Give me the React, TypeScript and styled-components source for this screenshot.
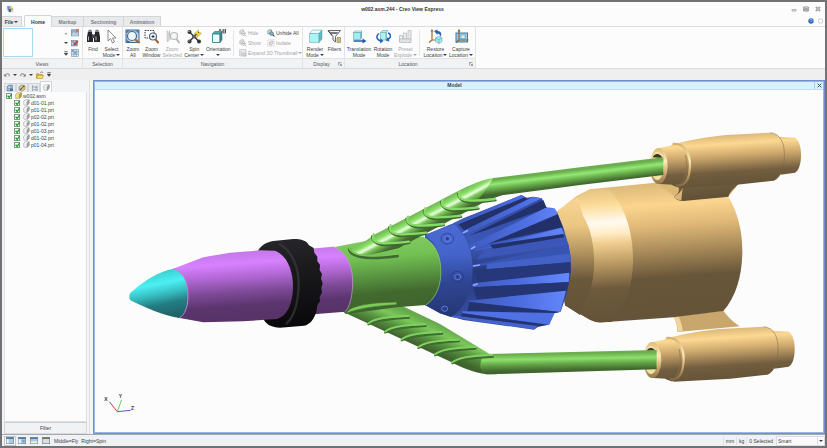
import React, { useState } from "react";
import styled, { createGlobalStyle, css } from "styled-components";

const Global = createGlobalStyle`
  * { box-sizing: border-box; }
  body { margin: 0; background: #fbfbfb; }
  body, button, select, input {
    font-family: "Liberation Sans", Arial, sans-serif;
    font-size: 5px;
    line-height: 6px;
    color: #3c3f44;
  }
  button { margin: 0; padding: 0; border: 0; background: none; }
  button:disabled { color: #a3a5a8; }
  svg { display: block; flex: none; }
`;

/* ---------- window frame ---------- */

const Window = styled.div`
  display: flex;
  flex-direction: column;
  height: 100vh;
  min-height: 300px;
  border: 2px solid #727174;
  background: #fcfcfc;
`;

const TitleBar = styled.header`
  display: grid;
  grid-template-columns: 1fr auto 1fr;
  align-items: center;
  height: 14px;
  padding: 0 4px;
`;

const Title = styled.h1`
  margin: 0;
  padding-right: 22px;
  font-size: 5px;
  font-weight: bold;
  color: #33363a;
`;

const WindowButtons = styled.div`
  display: flex;
  justify-content: flex-end;
  gap: 6px;
`;

const TabBar = styled.div`
  display: flex;
  align-items: flex-end;
  height: 11px;
  padding-right: 2px;
  border-bottom: 1px solid #dcdcde;
`;

const RibbonTab = styled.button<{ $active?: boolean; $w: number }>`
  width: ${(p) => p.$w}px;
  height: 10px;
  border: 1px solid #d3d5d8;
  border-left-width: 0;
  border-bottom: 0;
  background: #e9eaec;
  color: #7b8087;
  font-weight: bold;
  ${(p) =>
    p.$active &&
    css`
      height: 12px;
      margin-bottom: -1px;
      border-left-width: 1px;
      border-radius: 2px 2px 0 0;
      background: #fcfcfc;
      color: #33363a;
    `}
`;

const FileButton = styled(RibbonTab)`
  display: flex;
  align-items: center;
  justify-content: center;
  gap: 1px;
  margin-right: 2px;
  color: #3c3f44;
`;

const HelpTools = styled.div`
  display: flex;
  gap: 4px;
  margin-left: auto;
  padding-bottom: 2px;
`;

/* ---------- ribbon ---------- */

const Ribbon = styled.div`
  display: flex;
  height: 42px;
  border-bottom: 1px solid #dcdcde;
`;

const Group = styled.section<{ $w: number }>`
  display: flex;
  flex-direction: column;
  flex: none;
  width: ${(p) => p.$w}px;
  border-right: 1px solid #e2e3e5;
`;

const GroupBody = styled.div`
  display: flex;
  flex: 1;
  padding: 1px 1px 0;
`;

const GroupName = styled.div`
  display: flex;
  align-items: center;
  height: 10px;
  padding: 0 2px;
  border-top: 1px solid #e2e3e5;
  background: #f1f2f4;
  color: #55595f;

  span {
    flex: 1;
    text-align: center;
  }
`;

const ToolButton = styled.button<{ $w: number }>`
  display: flex;
  flex-direction: column;
  align-items: center;
  width: ${(p) => p.$w}px;
  white-space: nowrap;

  svg {
    margin: 1px 0 2px;
  }
  &:disabled svg {
    opacity: 0.6;
  }
`;

const ToolLine = styled.span`
  display: flex;
  align-items: center;
  gap: 1px;
  height: 6px;
`;

const Caret = styled.span`
  width: 0;
  height: 0;
  border: 2px solid transparent;
  border-top: 2px solid currentColor;
  border-bottom: 0;
`;

const Divider = styled.span`
  width: 1px;
  height: 26px;
  margin: 2px 3px 0 2px;
  background: #e4e5e7;
`;

const SmallTools = styled.div`
  display: grid;
  grid-template-columns: 28px 34px;
  grid-template-rows: repeat(3, 10px);
  padding-left: 2px;
`;

const SmallTool = styled.button<{ $wide?: boolean }>`
  display: flex;
  align-items: center;
  gap: 1px;
  white-space: nowrap;
  ${(p) => p.$wide && "grid-column: span 2;"}
`;

const Preview = styled.button`
  width: 30px;
  height: 29px;
  border: 1px solid #a6daf2;
  background: #fdfeff;
`;

const ViewScroll = styled.div`
  display: grid;
  grid-template-columns: 6px 8px;
  grid-template-rows: repeat(3, 10px);
  gap: 0 2px;
  margin-left: auto;
  padding-right: 2px;
  align-items: center;

  button {
    display: flex;
    justify-content: center;
  }
`;

const QuickAccess = styled.div`
  display: flex;
  align-items: center;
  gap: 3px;
  height: 11px;
  padding-left: 2px;
  background: #efeff0;

  button {
    display: flex;
  }
`;

/* ---------- work area ---------- */

const WorkArea = styled.main`
  display: flex;
  flex: 1;
  gap: 3px;
  min-height: 0;
  background: #f3f4f6;
`;

const Sidebar = styled.aside`
  display: flex;
  flex-direction: column;
  flex: none;
  width: 88px;
  padding: 1px 2px 0;
  border-right: 1px solid #dfe1e5;
`;

const SideTabs = styled.div`
  display: flex;
  flex: none;
  align-items: flex-end;
  height: 11px;
`;

const SideTab = styled.button<{ $active?: boolean }>`
  display: flex;
  align-items: center;
  justify-content: center;
  width: 12px;
  height: ${(p) => (p.$active ? 11 : 9)}px;
  border: 1px solid #d3d5d8;
  border-bottom: 0;
  background: ${(p) => (p.$active ? "#fcfcfc" : "#e9ebee")};
`;

const Tree = styled.ul`
  flex: 1;
  margin: 0;
  padding: 0 1px;
  list-style: none;
  border: 1px solid #dfe1e5;
  border-top: 0;
  background: #fcfcfc;
`;

const TreeRow = styled.li<{ $level: number }>`
  height: 7px;
  padding-left: ${(p) => p.$level * 8}px;

  label {
    display: flex;
    align-items: center;
    gap: 1px;
    height: 7px;
  }
  svg {
    margin-left: 2px;
  }
`;

const Check = styled.input`
  appearance: none;
  display: grid;
  place-items: center;
  width: 6px;
  height: 6px;
  margin: 0;
  border: 1px solid #7f9a83;
  background: #fff;

  &:checked::before {
    content: "";
    width: 5px;
    height: 5px;
    background: #179a22;
    clip-path: polygon(0 50%, 25% 35%, 42% 58%, 85% 0, 100% 20%, 45% 100%);
  }
`;

const FilterButton = styled.button`
  flex: none;
  height: 12px;
  border: 1px solid #d6d8dc;
  border-top-color: #c9ccd1;
  background: #f1f2f4;
`;

const Viewport = styled.section`
  display: flex;
  flex: 1;
  flex-direction: column;
  min-width: 0;
  border: 1px solid #6e8fd6;
  outline: 1px solid #9db4e6;
  outline-offset: -2px;
  background: #fcfcfc;
`;

const ViewportBar = styled.div`
  display: flex;
  flex: none;
  align-items: center;
  height: 9px;
  margin: 0 1px 1px;
  background: #d8f2fd;
  border-bottom: 1px solid #c3def0;
`;

const ViewportTitle = styled.h2`
  flex: 1;
  margin: 0;
  text-align: center;
  font-size: 5px;
  font-weight: bold;
  color: #2f4250;
`;

const CloseView = styled.button`
  display: grid;
  place-items: center;
  width: 9px;
  height: 8px;
  border-left: 1px solid #a9cde6;
`;

const Scene = styled.div`
  flex: 1;
  min-height: 0;

  svg {
    width: 100%;
    height: 100%;
  }
`;

const StatusBar = styled.footer`
  display: flex;
  flex: none;
  align-items: center;
  height: 12px;
  padding-left: 2px;
  border-top: 1px solid #a7a9ae;
  background: #f0f1f3;
`;

const LayoutButton = styled.button<{ $active?: boolean }>`
  display: grid;
  place-items: center;
  width: 12px;
  height: 10px;
  ${(p) => p.$active && "border: 1px solid #c3c6cc; background: #fafafa;"}
`;

const Hint = styled.span`
  margin: 0 1px 0 2px;
`;

const StatusCell = styled.span<{ $push?: boolean }>`
  margin-left: ${(p) => (p.$push ? "auto" : "0")};
  padding: 1px 2px;
  border-left: 1px solid #e0e1e4;
`;

const SelectWrap = styled.div`
  display: flex;
  align-items: center;
  width: 49px;
  height: 10px;
  margin-left: 1px;
  border: 1px solid #dadce0;
  background: #fafafa;
`;

const SmartSelect = styled.select`
  appearance: none;
  flex: 1;
  min-width: 0;
  height: 8px;
  padding: 0 1px;
  border: 0;
  border-right: 1px solid #dadce0;
  background: none;
`;

const SelectArrow = styled.span`
  display: grid;
  place-items: center;
  width: 6px;
`;

/* ---------- icons ---------- */

const Ico = ({ children, s = 15 }: { children: React.ReactNode; s?: number }) => (
  <svg width={s} height={s} viewBox="0 0 30 30" fill="none" aria-hidden="true">
    {children}
  </svg>
);

const Cube = ({ fill = "#a9f4f5" }: { fill?: string }) => (
  <>
    <path d="M3 9 9 2H28L22 9Z" fill="#e2ffff" stroke="#6e9aa0" />
    <path d="M3 9H22V27H3Z" fill={fill} stroke="#6e9aa0" />
    <path d="M22 9 28 2V20L22 27Z" fill="#5fb9c4" stroke="#6e9aa0" />
  </>
);

const Lens = ({ x = 18, y = 13, r = 7, c = "#54667a" }) => (
  <>
    <path d={`M${x + 5} ${y + 6}L28 27`} stroke={c === "#54667a" ? "#a8642c" : c} strokeWidth="4" strokeLinecap="round" />
    <circle cx={x} cy={y} r={r} fill="#eaf6fc" stroke={c} strokeWidth="2.4" />
  </>
);

const icons: Record<string, React.ReactNode> = {
  app: (
    <>
      <path d="M4 4H20L26 11V26H9L4 20Z" fill="#dfe8f2" stroke="#8b9bb0" />
      <path d="M5 5H17L13 15H5Z" fill="#5a9ad0" />
      <path d="M16 8 26 12V20L18 22Z" fill="#ecb03a" />
      <path d="M9 15 19 14V26H11Z" fill="#356f9d" />
      <circle cx="10" cy="18" r="3" fill="#d3553a" />
    </>
  ),
  find: (
    <>
      <path d="M4 5H12V10L14 12V26H2V16Z M18 5H26L28 16V26H16V12L18 10Z" fill="#24262a" />
      <path d="M12 11H18V18H12Z" fill="#45484d" />
      <path d="M5 15V23M20 15V23" stroke="#b5b8bd" strokeWidth="2" />
      <path d="M5 3H11M19 3H25" stroke="#74777c" strokeWidth="3" />
    </>
  ),
  select: <path d="M8 2V24L13 19 17 28 21 26 17 18H24Z" fill="#fff" stroke="#6f7276" strokeWidth="1.6" />,
  zoomAll: (
    <>
      <rect x="2" y="2" width="26" height="25" fill="#b9dcf3" stroke="#3b6b9a" strokeWidth="2" />
      <path d="M4 8V4H9M21 4H26V8M4 21V25H9" stroke="#2b5a88" strokeWidth="2" />
      <Lens x={14} y={14} r={9} />
    </>
  ),
  zoomWindow: (
    <>
      <rect x="2" y="3" width="18" height="15" stroke="#33363a" strokeWidth="2" strokeDasharray="3 2" />
      <Lens x={18} y={15} r={7} />
      <path d="M15 15H21M18 12V18" stroke="#33363a" strokeWidth="2" />
    </>
  ),
  zoomSelected: (
    <>
      <path d="M4 3V26L14 18Z" fill="#b9bbbe" stroke="#8d9093" />
      <path d="M9 3V14" stroke="#8d9093" strokeWidth="2" />
      <Lens x={18} y={14} r={7} c="#8d9093" />
    </>
  ),
  spin: (
    <>
      <path d="M5 6 14 15 24 25M14 15 5 25M14 15 24 6" stroke="#3a3d41" strokeWidth="3" />
      <path d="M15 9 23 2 22 8H29L19 18 21 11Z" fill="#ffdf2e" stroke="#a58a14" />
      <circle cx="5" cy="6" r="4" fill="#303338" />
      <circle cx="5" cy="25" r="4" fill="#303338" />
      <circle cx="24" cy="25" r="4" fill="#303338" />
      <circle cx="14" cy="15" r="4" fill="#5b5f66" />
      <circle cx="4" cy="5" r="1.2" fill="#fff" />
      <circle cx="4" cy="24" r="1.2" fill="#fff" />
    </>
  ),
  orientation: (
    <>
      <path d="M3 10 7 5H22L18 10Z" fill="#49a8ae" stroke="#3d4a50" />
      <path d="M3 10H18V27H3Z" fill="#e8ffff" stroke="#3f9299" strokeWidth="2" />
      <path d="M18 10 22 5V22L18 27Z" fill="#3a8f97" stroke="#3d4a50" />
      <path d="M16 4 18 0 20 4M24 0V8H29V0Z M24 4H29" stroke="#33363a" strokeWidth="1.6" />
    </>
  ),
  render: <Cube />,
  filters: (
    <>
      <path d="M2 3H27L17 15V26L12 22V15Z" fill="#f2f2ee" stroke="#63676c" strokeWidth="2" />
      <path d="M6 6H23L19 10H9Z" fill="#777b80" />
      <path d="M20 17H27V27H20Z" fill="#c8c17a" stroke="#6a6a4a" />
      <path d="M3 4 10 13" stroke="#33363a" strokeWidth="2" />
    </>
  ),
  translation: (
    <>
      <path d="M3 7 6 4H20L17 7Z" fill="#e2ffff" stroke="#5c8c98" />
      <path d="M3 7H17V21H3Z" fill="#9feef2" stroke="#5c8c98" />
      <path d="M17 7 20 4V18L17 21Z" fill="#5fb9c4" />
      <path d="M3 24H22" stroke="#2358a8" strokeWidth="3" />
      <path d="M21 19 29 24 21 29Z" fill="#2358a8" />
    </>
  ),
  rotation: (
    <>
      <path d="M9 7 13 3H24L21 7V19L18 22H9Z" fill="#a9f4f5" stroke="#5c8c98" />
      <path d="M9 7H20V21" stroke="#5c8c98" />
      <path d="M6 9C-1 14 1 22 10 24" stroke="#2363b8" strokeWidth="3" />
      <path d="M9 19 15 24 8 29Z" fill="#2363b8" />
      <path d="M24 21C31 17 30 9 24 8" stroke="#2363b8" strokeWidth="3" />
      <path d="M24 16 19 23 27 25Z" fill="#2363b8" />
    </>
  ),
  explode: (
    <>
      <path d="M3 13H9V24H3Z M11 8H17V20H11Z M20 3H26V20H20Z" fill="#e3e4e6" stroke="#8f9195" strokeWidth="1.6" />
      <path d="M3 20H26V27H3Z" fill="#d2d4d7" stroke="#8f9195" strokeWidth="1.6" />
    </>
  ),
  restore: (
    <>
      <path d="M8 2V22M8 22 2 27M8 22H20" stroke="#9d6a2a" strokeWidth="2.4" />
      <path d="M5 5 8 0 11 5Z" fill="#9d6a2a" />
      <path d="M12 4 19 1V4C27 4 28 11 25 16 24 11 22 9 19 9V12Z" fill="#2563bb" />
      <path d="M15 18 22 14 28 18V25L22 29 15 25Z" fill="#9feef2" stroke="#5c8c98" />
      <path d="M15 18 22 21 28 18M22 21V29" stroke="#5c8c98" />
    </>
  ),
  capture: (
    <>
      <rect x="4" y="8" width="23" height="18" fill="#9cc9e8" stroke="#3f79ab" strokeWidth="2" />
      <path d="M10 2V22M10 22 4 27M10 22H29" stroke="#87602c" strokeWidth="2.2" />
      <path d="M7 5 10 0 13 5Z" fill="#87602c" />
      <path d="M14 12H22V19H14Z" fill="#c6fbfc" stroke="#558fa8" />
    </>
  ),
  hide: (
    <>
      <path d="M3 7 8 3H17V15L13 18H3Z" fill="#e0e1e3" stroke="#a5a7ab" strokeWidth="2" />
      <circle cx="17" cy="17" r="7" fill="#eee" stroke="#a5a7ab" strokeWidth="2" />
      <path d="M22 22 28 28M12 17H22" stroke="#a5a7ab" strokeWidth="3" />
    </>
  ),
  unhide: (
    <>
      <path d="M3 7 8 3H17V15L13 18H3Z" fill="#bfd7e2" stroke="#55707c" strokeWidth="2" />
      <circle cx="17" cy="17" r="7" fill="#7fb2c4" stroke="#3e5560" strokeWidth="2" />
      <path d="M22 22 28 28" stroke="#3a3d41" strokeWidth="4" />
    </>
  ),
  isolate: (
    <>
      <rect x="3" y="3" width="24" height="24" stroke="#a5a7ab" strokeWidth="2" strokeDasharray="4 3" />
      <path d="M9 12 14 8H22V18L18 22H9Z" fill="#dcdddf" stroke="#a5a7ab" strokeWidth="2" />
    </>
  ),
  thumb: (
    <>
      <rect x="3" y="3" width="23" height="23" fill="#f1f1f2" stroke="#a5a7ab" strokeWidth="2" />
      <path d="M8 8V20H20M8 20 18 10" stroke="#a5a7ab" strokeWidth="2" />
      <circle cx="21" cy="21" r="6" fill="#d5d6d8" stroke="#a5a7ab" strokeWidth="2" />
    </>
  ),
  viewA: (
    <>
      <rect x="1" y="3" width="28" height="23" fill="#8fb1d1" stroke="#5f7893" strokeWidth="2" />
      <path d="M3 19 12 11 18 17 27 12V25H3Z" fill="#c2cfdb" />
      <path d="M19 1H28V10H19Z" fill="#cf6e4f" />
    </>
  ),
  viewB: (
    <>
      <rect x="1" y="5" width="24" height="21" fill="#a5c3dd" stroke="#5f7893" strokeWidth="2" />
      <path d="M8 22 22 5 28 10 14 26Z" fill="#c4483a" />
      <path d="M6 8 20 22" stroke="#7d4654" strokeWidth="3" />
    </>
  ),
  viewC: (
    <>
      <rect x="2" y="2" width="26" height="26" fill="#dce8f3" stroke="#6484a5" strokeWidth="2" />
      <path d="M2 10H28M2 19H28M11 2V28M20 2V28" stroke="#6484a5" strokeWidth="2" />
      <path d="M3 3H11V10H3ZM12 11H20V19H12Z" fill="#7ba0c8" />
    </>
  ),
  undo: <path d="M4 10V21H13M5 20C8 8 20 6 26 12V21" stroke="#64676c" strokeWidth="4" />,
  redo: <path d="M26 10V21H17M25 20C22 8 10 6 4 12V21" stroke="#64676c" strokeWidth="4" />,
  folder: (
    <>
      <path d="M2 10H10L13 13H24V27H2Z" fill="#d9b73c" stroke="#9c8220" strokeWidth="2" />
      <path d="M7 17H29L23 27H2Z" fill="#ffe978" stroke="#a58b22" strokeWidth="2" />
      <path d="M16 8C18 2 24 2 27 7" stroke="#59626c" strokeWidth="2.6" />
    </>
  ),
  sideA: (
    <>
      <path d="M4 9 12 4H24V19L17 26H4Z" fill="#9dbbd3" stroke="#4e6f8d" strokeWidth="2" />
      <circle cx="12" cy="12" r="5" fill="#e9eef3" stroke="#4e6f8d" strokeWidth="2" />
      <path d="M15 17H26V27H15Z" fill="#42749e" />
    </>
  ),
  sideB: (
    <>
      <path d="M4 10 14 4 26 8V20L16 27 4 22Z" fill="#dad7a6" stroke="#5c5f55" strokeWidth="2" />
      <path d="M8 22 24 6" stroke="#4d4b3a" strokeWidth="4" />
      <path d="M16 14 25 12V20L17 24Z" fill="#e9bd3e" />
    </>
  ),
  sideC: (
    <path d="M7 3V27M7 9H18M7 20H18M4 4H10M20 6H27V12H20ZM20 17H27V23H20Z" stroke="#6f7d8e" strokeWidth="2.4" />
  ),
  part: (
    <>
      <path d="M3 9 12 3H26V19L17 27H8C4 27 3 24 3 20Z" fill="#f4f4f2" stroke="#85888d" strokeWidth="2" />
      <path d="M17 12 26 4V19L17 27Z" fill="#a9abad" stroke="#77797d" strokeWidth="2" />
    </>
  ),
  assembly: (
    <>
      <path d="M3 9 12 3H27V19L18 27H3Z" fill="#f4e48c" stroke="#857a45" strokeWidth="2" />
      <path d="M18 11 27 4V19L18 27Z" fill="#c2a63c" stroke="#857a45" strokeWidth="2" />
    </>
  ),
};

const Panel = ({ kind }: { kind: number }) => (
  <svg width="8" height="7" viewBox="0 0 24 21" aria-hidden="true">
    <rect x="1" y="1" width="22" height="19" fill={kind === 3 ? "#d8dfd8" : "#a9cbe4"} stroke="#6f8393" strokeWidth="2" />
    <rect x="1" y="1" width="22" height="5" fill={kind === 3 ? "#69746c" : "#4f7ba2"} />
    {kind < 2 && <rect x="2" y="6" width="6" height="13" fill="#eef5fa" />}
    {kind === 1 && <path d="M13 10H20M13 14H20" stroke="#4f7ba2" strokeWidth="2" />}
    {kind === 2 && <rect x="2" y="13" width="20" height="6" fill="#f2ecd0" />}
  </svg>
);

/* ---------- 3D model ---------- */

const stops = (list: [number, string][]) =>
  list.map(([o, c]) => <stop key={o} offset={o} stopColor={c} />);

const Grad = ({ id, v, list }: { id: string; v: [number, number, number, number]; list: [number, string][] }) => (
  <linearGradient id={id} gradientUnits="userSpaceOnUse" x1={v[0]} y1={v[1]} x2={v[2]} y2={v[3]}>
    {stops(list)}
  </linearGradient>
);

const Nacelle = () => (
  <g>
    <path d="M715 50 765 53C777 60 784 82 783 110 782 136 775 152 765 158L722 164Z" fill="url(#pod)" />
    <path d="M395 74C440 62 500 50 560 45L690 38C722 40 735 72 733 110 733 145 722 174 700 182L590 194 420 203Z" fill="url(#pod)" />
    <path d="M690 38C722 40 735 72 733 110 733 145 722 174 700 182" stroke="#7a6542" strokeWidth="1.5" fill="none" />
    <path d="M395 74C430 64 456 90 457 134 457 180 440 204 412 202L395 195Z" fill="url(#pod)" />
    <path d="M398 72C432 68 450 98 450 136 449 178 436 200 408 196" fill="none" stroke="url(#rim)" strokeWidth="7" />
    <path d="M355 84 400 76C430 76 442 105 441 137 440 172 428 194 400 194L358 192Z" fill="url(#pod)" />
    <path d="M436 105C444 140 440 172 424 190" fill="none" stroke="#8a7249" strokeWidth="2" />
    <ellipse cx="356" cy="138" rx="27" ry="54" fill="url(#rim)" />
    <ellipse cx="352" cy="138" rx="19" ry="42" fill="#f2e3a4" />
    <path d="M338 112C342 101 354 98 364 108L366 114Z" fill="#3c3522" />
  </g>
);

const coilTop: [number, number][] = [[383, 65], [332, 90], [280, 115], [228, 140], [176, 166], [125, 193]];
const coilLow: [number, number][] = [[115, 460], [165, 485], [215, 508], [265, 531], [315, 553], [367, 577]];

const Model = () => (
  <svg viewBox="-708 -237 2190 1026" role="img" aria-label="Rocket assembly">
    <defs>
      <Grad id="tan" v={[380, 195, 410, 600]} list={[[0, "#e0bc7b"], [0.14, "#fbd58e"], [0.3, "#dfb878"], [0.48, "#a98b5a"], [0.68, "#68563a"], [1, "#645338"]]} />
      <Grad id="cone" v={[190, 205, 215, 600]} list={[[0, "#e5c280"], [0.12, "#fbdb98"], [0.26, "#fffaf0"], [0.34, "#ffedc8"], [0.42, "#f0cd8e"], [0.58, "#b79762"], [0.76, "#6d5a3c"], [1, "#645338"]]} />
      <Grad id="neck" v={[100, 240, 110, 590]} list={[[0, "#f6d491"], [0.22, "#ecc683"], [0.45, "#b2935f"], [0.68, "#6a583b"], [1, "#645338"]]} />
      <Grad id="pod" v={[540, 45, 550, 200]} list={[[0, "#dab776"], [0.18, "#fcd892"], [0.42, "#cba66b"], [0.72, "#725e3f"], [1, "#645338"]]} />
      <Grad id="rim" v={[400, 72, 405, 200]} list={[[0, "#d5b06f"], [0.4, "#ffeab8"], [0.7, "#c6a369"], [1, "#7d6744"]]} />
      <Grad id="strut" v={[480, 190, 485, 240]} list={[[0, "#725e3f"], [1, "#5f4f35"]]} />
      <Grad id="bolt" v={[370, 170, 385, 445]} list={[[0, "#4a69d2"], [0.3, "#4564cb"], [0.6, "#2f4694"], [1, "#24356f"]]} />
      <Grad id="skirt" v={[550, 90, 560, 475]} list={[[0, "#3149a0"], [0.35, "#3d59b8"], [0.55, "#27397a"], [1, "#3a55b0"]]} />
      <Grad id="rib" v={[430, 0, 710, 0]} list={[[0, "#3f5cc0"], [0.5, "#4c6de0"], [1, "#6487fb"]]} />
      <Grad id="body" v={[180, 205, 200, 420]} list={[[0, "#7fca60"], [0.25, "#74c153"], [0.45, "#5f9f46"], [0.75, "#42692f"], [1, "#3f642e"]]} />
      <Grad id="tubeR" v={[740, 0, 746, 50]} list={[[0, "#6aae4d"], [0.25, "#93e874"], [0.5, "#6cb34e"], [0.85, "#426a30"], [1, "#3f642e"]]} />
      <Grad id="tubeD" v={[265, 122, 300, 188]} list={[[0, "#6aae4d"], [0.26, "#8be069"], [0.4, "#eaffdf"], [0.52, "#7cc95c"], [0.8, "#42692f"], [1, "#3f642e"]]} />
      <Grad id="lowR" v={[740, 550, 741, 606]} list={[[0, "#69ad4c"], [0.28, "#8de06c"], [0.55, "#64a548"], [0.88, "#42692f"], [1, "#3f642e"]]} />
      <Grad id="lowD" v={[295, 452, 265, 525]} list={[[0, "#67a94b"], [0.3, "#7ac85a"], [0.65, "#568f3f"], [1, "#3f642e"]]} />
      <Grad id="purple" v={[330, 95, 345, 300]} list={[[0, "#c377e6"], [0.18, "#d881ff"], [0.38, "#b067d2"], [0.6, "#7d4a96"], [0.8, "#5b356d"], [1, "#573368"]]} />
      <Grad id="cyan" v={[105, 160, 130, 290]} list={[[0, "#3dd3d6"], [0.25, "#4cf0f2"], [0.48, "#38bec2"], [0.72, "#237d82"], [1, "#1e656a"]]} />
      <Grad id="black" v={[520, 60, 530, 320]} list={[[0, "#26262a"], [0.3, "#1b1b1e"], [1, "#09090b"]]} />
    </defs>

    <g transform="translate(630 -150)">
      <path d="M400 590 550 572C568 596 585 610 600 619L412 636C412 615 408 600 400 590Z" fill="#c8a66c" />
      <path d="M400 590C410 602 414 618 412 636L428 632C426 612 420 600 416 588Z" fill="#f2d39a" />
      <path d="M50 275 110 228 150 208 345 188 565 230C592 275 608 330 607 400 605 470 588 530 550 573L400 592 190 607C170 608 160 604 150 599L75 556Z" fill="url(#tan)" />
      <path d="M345 188 420 193 595 192 565 230 420 240Z" fill="#ddb978" />
      <path d="M50 275 150 208 205 207C250 250 280 330 279 425 277 490 262 560 215 606L175 607 150 599 75 556Z" fill="url(#cone)" />
      <path d="M50 275 112 232 130 290C165 340 170 450 152 505L120 585 75 556Z" fill="url(#neck)" />
      <path d="M415 200 595 192C582 206 570 214 565 230L430 243C412 242 405 235 402 230 414 222 420 212 415 200Z" fill="url(#strut)" />
      <path d="M402 230C414 224 424 214 428 204L424 240C412 241 406 236 402 230Z" fill="#d9b67a" />
      <Nacelle />
      <g transform="translate(-19 582)">
        <Nacelle />
      </g>
    </g>

    <g>
      <path d="M285 195 370 160 400 145 575 75 590 83 610 80 636 85 644 112 668 114 680 125 700 172 715 225 722 260 722 310 712 366 692 425 672 430 656 464 625 470 612 479 400 450 330 430 285 405Z" fill="url(#skirt)" />
      <path d="M385 162 578 82 604 92 405 184Z M420 196 640 90 650 114 470 180Z" fill="#23316a" />
      <path d="M370 160 573 75 584 82 378 166Z M400 182 608 81 636 85 414 190Z" fill="url(#rib)" />
      <path d="M500 190 682 128 698 172 470 222Z" fill="#22306a" />
      <path d="M420 226 646 114 674 115 684 132 430 240Z" fill="url(#rib)" />
      <path d="M470 232 702 192 716 224 440 268Z" fill="#3c57b8" />
      <path d="M440 238 694 173 702 192 436 242Z" fill="url(#rib)" />
      <path d="M480 225 700 192 702 202 490 236Z" fill="#22306a" />
      <path d="M428 285 716 225 720 255 430 290Z" fill="#3854b2" />
      <path d="M470 282 714 251 721 254V276L470 298Z" fill="#4362c8" />
      <path d="M440 300 721 277 722 310 440 338Z" fill="#26377a" />
      <path d="M428 340 718 308 716 336 430 352Z" fill="url(#rib)" />
      <path d="M430 352 716 336 710 364 440 390Z" fill="#253574" />
      <path d="M415 392 708 362 690 426 420 396Z" fill="url(#rib)" />
      <path d="M418 396 690 426 672 430 412 424Z" fill="#24336e" />
      <path d="M395 424 674 429 658 464 400 430Z" fill="#4f71e4" />
      <path d="M398 430 652 464 622 470 390 440Z" fill="#24336e" />
      <path d="M365 436 625 468 610 478 365 442Z" fill="#4563cc" />
      <path d="M400 188 412 182M424 236 434 230M430 288 448 285M430 346 442 342" stroke="#8ea8ff" strokeWidth="5" strokeLinecap="round" />
      <path d="M285 195 372 162C405 190 428 240 428 302 427 360 405 418 362 441L330 430 285 405C318 380 335 345 335 300 335 255 315 215 285 195Z" fill="url(#bolt)" />
      {[[352, 206], [382, 320], [343, 415]].map(([x, y]) => (
        <g key={y} fill="none">
          <ellipse cx={x} cy={y} rx="19" ry={y > 400 ? 11 : 16} stroke="#25387e" strokeWidth="2" />
          <ellipse cx={x + 1} cy={y + 1} rx="9" ry="8" stroke="#5d7ce2" strokeWidth="3" />
          <ellipse cx={x} cy={y} rx="5" ry="5" fill="#2c418e" />
        </g>
      ))}
    </g>

    <g>
      <path d="M70 402 200 400 330 462 480 553 500 556 L500 613 470 613C430 608 400 595 365 577L48 430Z" fill="url(#lowD)" />
      <path d="M470 552 980 540V598L470 613C440 605 450 560 470 552Z" fill="url(#lowR)" />
      <path d="M15 231 60 222 200 196 280 200C315 220 333 255 333 305 333 345 318 385 288 405L200 412 48 432 40 425Z" fill="url(#body)" />
      <path d="M278 200C315 220 333 255 333 305 333 345 318 385 288 405" fill="none" stroke="#8fd873" strokeWidth="2" />
      <path d="M48 430C60 408 110 398 200 396V404C140 408 90 414 48 430Z" fill="#7ccc5c" stroke="#437030" strokeWidth="2" />
      {coilLow.map(([x, y]) => (
        <g key={x} fill="none" strokeLinecap="round">
          <path d={`M${x} ${y + 3}Q${x + 30} ${y - 12} ${x + 122} ${y - 17}`} stroke="#3f6a31" strokeWidth="6" />
          <path d={`M${x} ${y}Q${x + 24} ${y - 20} ${x + 120} ${y - 22}`} stroke="#80d260" strokeWidth="6" />
        </g>
      ))}
      <path d="M62 238C90 225 105 215 130 196L380 65C415 48 455 28 490 24L515 76 470 92 205 235 130 252C90 258 70 250 62 238Z" fill="url(#tubeD)" />
      <path d="M490 24 750 -8 1000 -38V15L750 45 515 76C490 80 460 88 440 92 465 70 475 45 490 24Z" fill="url(#tubeR)" />
      {coilTop.map(([x, y]) => (
        <g key={x} fill="none" strokeLinecap="round">
          <path d={`M${x + 1} ${y + 6}C${x + 4} ${y + 42} ${x + 60} ${y + 34} ${x + 114} ${y + 26}`} stroke="#3f6a31" strokeWidth="6" />
          <path d={`M${x + 6} ${y}C${x - 8} ${y + 34} ${x + 50} ${y + 29} ${x + 112} ${y + 22}`} stroke="#86da66" strokeWidth="7" />
        </g>
      ))}
      <path d="M58 238C66 270 140 266 202 258" fill="none" stroke="#3f6a31" strokeWidth="9" strokeLinecap="round" />
      <path d="M58 236C70 262 140 260 202 252" fill="none" stroke="#79c559" strokeWidth="5" strokeLinecap="round" />
    </g>

    <g transform="translate(-630 150)">
      <path d="M570 86 640 80C680 95 700 140 698 195 696 235 688 262 675 275L590 282 570 280Z" fill="url(#purple)" />
      <path d="M640 80C680 95 700 140 698 195 696 235 688 262 675 275" fill="none" stroke="#c9a0d8" strokeWidth="2" />
      <path d="M415 90C425 75 440 66 460 63L520 57C545 57 560 62 567 76L581 84 583 98 592 110 592 124 600 134 599 150 606 162 603 176 608 190 604 204 606 218 599 230 600 244 592 256 590 272C583 296 570 314 552 317L480 323C455 322 440 314 432 300Z" fill="url(#black)" />
      <path d="M478 72C520 95 538 150 536 200 533 255 522 292 498 312" fill="none" stroke="#3f4044" strokeWidth="7" opacity=".6" />
      <path d="M160 146 250 112 330 98 420 91 465 92C500 105 520 150 519 205 517 255 500 290 470 297L370 304 250 307 175 293Z" fill="url(#purple)" />
      <path d="M28 230C27 224 30 218 38 213 75 180 115 155 160 146 192 156 205 190 204 230 203 262 195 284 178 294 125 284 75 262 34 242 29 239 28 235 28 230Z" fill="url(#cyan)" />
      <path d="M160 146C192 156 205 190 204 230 203 262 195 284 178 294" fill="none" stroke="#b889d6" strokeWidth="3" />
    </g>

    <g transform="translate(-705 125)" strokeWidth="3" fontFamily="Liberation Sans, Arial, sans-serif" fontSize="15" fontWeight="bold">
      <path d="M67 600 43 570" stroke="#c83c3c" />
      <path d="M67 600 80 564" stroke="#5fd45f" />
      <path d="M67 600 107 596" stroke="#5a5ac8" />
      <text x="28" y="567" fill="#333">X</text>
      <text x="71" y="558" fill="#333">Y</text>
      <text x="108" y="594" fill="#333">Z</text>
    </g>
  </svg>
);

/* ---------- page ---------- */

type ToolProps = { icon: string; lines: string[]; w: number; menu?: boolean; disabled?: boolean };

const Tool = ({ icon, lines, w, menu, disabled }: ToolProps) => (
  <ToolButton $w={w} disabled={disabled}>
    <Ico>{icons[icon]}</Ico>
    {lines.map((t, i) => (
      <ToolLine key={t}>
        {t}
        {menu && i === 1 && <Caret />}
      </ToolLine>
    ))}
    {menu && lines.length === 1 && (
      <ToolLine>
        <Caret />
      </ToolLine>
    )}
  </ToolButton>
);

const Launcher = () => (
  <svg width="4" height="4" viewBox="0 0 12 12" aria-hidden="true">
    <path d="M1 10V1H10M5 5 10 10M11 5V11H5" stroke="#6d7177" strokeWidth="2" fill="none" />
  </svg>
);

const parts = ["d01-01.prt", "p01-01.prt", "p02-02.prt", "p01-02.prt", "p01-03.prt", "d01-02.prt", "p01-04.prt"];

export default function App() {
  const [tab, setTab] = useState("Home");
  const tabs: [string, number][] = [["Home", 28], ["Markup", 32], ["Sectioning", 40], ["Animation", 37]];

  return (
    <Window>
      <Global />
      <TitleBar>
        <Ico s={8}>{icons.app}</Ico>
        <Title>w002.asm.244 - Creo View Express</Title>
        <WindowButtons>
          <button aria-label="Minimize">
            <svg width="6" height="6" viewBox="0 0 18 18"><path d="M3 11H15V15H3Z" fill="none" stroke="#85888d" strokeWidth="2" /></svg>
          </button>
          <button aria-label="Maximize">
            <svg width="6" height="6" viewBox="0 0 18 18"><path d="M2 3H16V15H2ZM5 8H13V12H5Z" fill="none" stroke="#77797d" strokeWidth="2.4" /></svg>
          </button>
          <button aria-label="Close">
            <svg width="6" height="6" viewBox="0 0 18 18"><path d="M3 3 15 15M15 3 3 15" stroke="#77797d" strokeWidth="5" /><path d="M4 4 14 14M14 4 4 14" stroke="#fff" strokeWidth="1.5" /></svg>
          </button>
        </WindowButtons>
      </TitleBar>

      <TabBar>
        <FileButton $w={20}>File <Caret /></FileButton>
        {tabs.map(([name, w]) => (
          <RibbonTab key={name} $w={w} $active={tab === name} onClick={() => setTab(name)}>
            {name}
          </RibbonTab>
        ))}
        <HelpTools>
          <button aria-label="Help">
            <svg width="6" height="6" viewBox="0 0 18 18"><circle cx="9" cy="9" r="8" fill="#2f66bd" /><path d="M6 7C6 3 12 3 12 7 12 9 9 9 9 12" stroke="#cfe2ff" strokeWidth="2" fill="none" /></svg>
          </button>
          <button aria-label="Options">
            <svg width="5" height="6" viewBox="0 0 15 18"><path d="M3 3H12L14 9 12 15H3L1 9Z" fill="#fff" stroke="#b9bbbf" strokeWidth="2" /></svg>
          </button>
        </HelpTools>
      </TabBar>

      <Ribbon>
        <Group $w={81}>
          <GroupBody>
            <Preview aria-label="Default view" />
            <ViewScroll>
              <button aria-label="Previous views"><svg width="4" height="3" viewBox="0 0 12 9"><path d="M1 7 6 2 11 7Z" fill="#85888d" /></svg></button>
              <button aria-label="Save view"><Ico s={8}>{icons.viewA}</Ico></button>
              <button aria-label="Next views"><Caret /></button>
              <button aria-label="Delete view"><Ico s={8}>{icons.viewB}</Ico></button>
              <button aria-label="More views"><svg width="4" height="5" viewBox="0 0 12 15"><path d="M1 2H11M1 7H11L6 13Z" stroke="#33363a" strokeWidth="2" fill="#33363a" /></svg></button>
              <button aria-label="Manage views"><Ico s={8}>{icons.viewC}</Ico></button>
            </ViewScroll>
          </GroupBody>
          <GroupName><span>Views</span></GroupName>
        </Group>

        <Group $w={40}>
          <GroupBody>
            <Tool icon="find" lines={["Find"]} w={18} />
            <Tool icon="select" lines={["Select", "Mode"]} w={19} menu />
          </GroupBody>
          <GroupName><span>Selection</span></GroupName>
        </Group>

        <Group $w={180}>
          <GroupBody>
            <Tool icon="zoomAll" lines={["Zoom", "All"]} w={18} />
            <Tool icon="zoomWindow" lines={["Zoom", "Window"]} w={20} />
            <Tool icon="zoomSelected" lines={["Zoom", "Selected"]} w={22} disabled />
            <Tool icon="spin" lines={["Spin", "Center"]} w={23} menu />
            <Tool icon="orientation" lines={["Orientation"]} w={26} menu />
            <Divider />
            <SmallTools>
              <SmallTool disabled><Ico s={8}>{icons.hide}</Ico>Hide</SmallTool>
              <SmallTool><Ico s={8}>{icons.unhide}</Ico>Unhide All</SmallTool>
              <SmallTool disabled><Ico s={8}>{icons.hide}</Ico>Show</SmallTool>
              <SmallTool disabled><Ico s={8}>{icons.isolate}</Ico>Isolate</SmallTool>
              <SmallTool $wide disabled><Ico s={8}>{icons.thumb}</Ico>Expand 3D Thumbnail<Caret /></SmallTool>
            </SmallTools>
          </GroupBody>
          <GroupName><span>Navigation</span></GroupName>
        </Group>

        <Group $w={42}>
          <GroupBody>
            <Tool icon="render" lines={["Render", "Mode"]} w={22} menu />
            <Tool icon="filters" lines={["Filters"]} w={17} />
          </GroupBody>
          <GroupName><span>Display</span><Launcher /></GroupName>
        </Group>

        <Group $w={131}>
          <GroupBody>
            <Tool icon="translation" lines={["Translation", "Mode"]} w={26} />
            <Tool icon="rotation" lines={["Rotation", "Mode"]} w={22} />
            <Tool icon="explode" lines={["Preset", "Explode"]} w={23} menu disabled />
            <Divider />
            <Tool icon="restore" lines={["Restore", "Location"]} w={25} menu />
            <Tool icon="capture" lines={["Capture", "Location"]} w={26} menu />
          </GroupBody>
          <GroupName><span>Location</span><Launcher /></GroupName>
        </Group>
      </Ribbon>

      <QuickAccess>
        <button aria-label="Undo"><Ico s={6}>{icons.undo}</Ico></button>
        <Caret />
        <button aria-label="Redo"><Ico s={6}>{icons.redo}</Ico></button>
        <Caret />
        <button aria-label="Open"><Ico s={8}>{icons.folder}</Ico></button>
        <button aria-label="Customize toolbar"><svg width="4" height="5" viewBox="0 0 12 15"><path d="M1 2H11M1 7H11L6 13Z" stroke="#33363a" strokeWidth="2" fill="#33363a" /></svg></button>
      </QuickAccess>

      <WorkArea>
        <Sidebar>
          <SideTabs>
            <SideTab aria-label="Views list"><Ico s={8}>{icons.sideA}</Ico></SideTab>
            <SideTab aria-label="Markups"><Ico s={8}>{icons.sideB}</Ico></SideTab>
            <SideTab aria-label="Structure"><Ico s={7}>{icons.sideC}</Ico></SideTab>
            <SideTab $active aria-label="Parts"><Ico s={7}>{icons.part}</Ico></SideTab>
          </SideTabs>
          <Tree>
            <TreeRow $level={0}>
              <label><Check type="checkbox" defaultChecked /><Ico s={7}>{icons.assembly}</Ico>w002.asm</label>
            </TreeRow>
            {parts.map((p) => (
              <TreeRow key={p} $level={1}>
                <label><Check type="checkbox" defaultChecked /><Ico s={7}>{icons.part}</Ico>{p}</label>
              </TreeRow>
            ))}
          </Tree>
          <FilterButton>Filter</FilterButton>
        </Sidebar>

        <Viewport>
          <ViewportBar>
            <ViewportTitle>Model</ViewportTitle>
            <CloseView aria-label="Close model">
              <svg width="5" height="5" viewBox="0 0 15 15"><path d="M2 2 13 13M13 2 2 13" stroke="#3e5260" strokeWidth="3" /></svg>
            </CloseView>
          </ViewportBar>
          <Scene><Model /></Scene>
        </Viewport>
      </WorkArea>

      <StatusBar>
        {[0, 1, 2, 3].map((k) => (
          <LayoutButton key={k} $active={k === 0} aria-label={`Layout ${k + 1}`}><Panel kind={k} /></LayoutButton>
        ))}
        <Hint>Middle=Fly</Hint>
        <Hint>Right=Spin</Hint>
        <StatusCell $push>mm</StatusCell>
        <StatusCell>kg</StatusCell>
        <StatusCell>0 Selected</StatusCell>
        <SelectWrap>
          <SmartSelect aria-label="Selection filter" defaultValue="Smart">
            <option>Smart</option>
          </SmartSelect>
          <SelectArrow><Caret /></SelectArrow>
        </SelectWrap>
      </StatusBar>
    </Window>
  );
}
